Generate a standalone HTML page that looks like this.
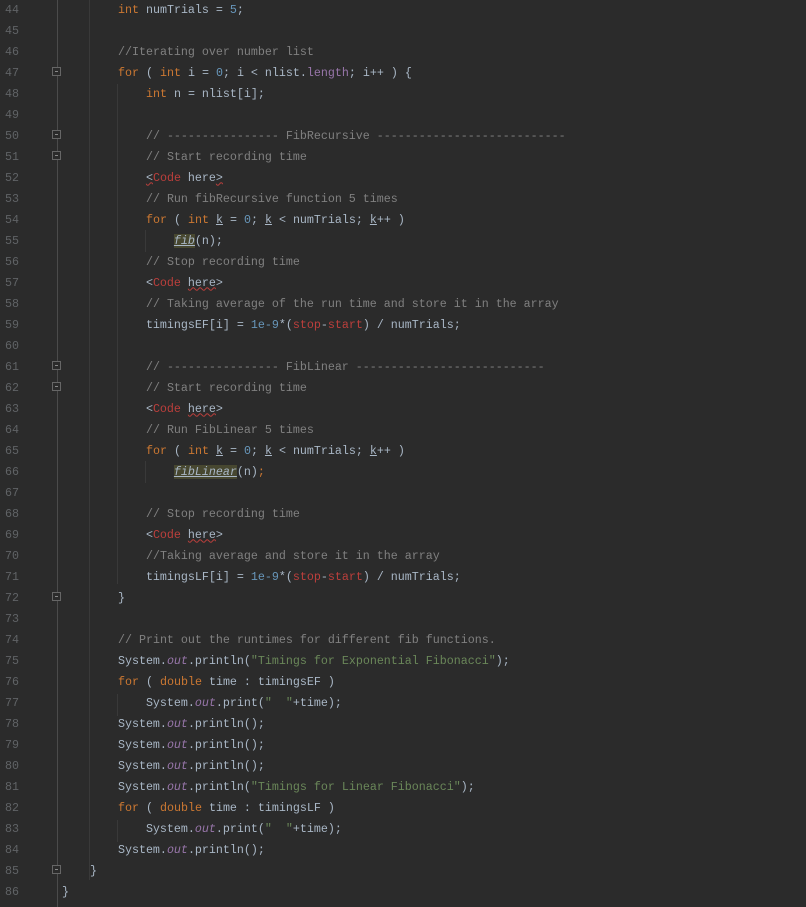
<!DOCTYPE html>
<html><head><meta charset="utf-8"><style>
html,body{margin:0;padding:0;background:#2b2b2b;width:806px;height:907px;overflow:hidden}
.ln{position:absolute;left:0;width:19px;text-align:right;color:#606366;font:11.67px "Liberation Mono",monospace;line-height:21px}
.code{position:absolute;left:62px;top:-0.5px;font:11.67px "Liberation Mono",monospace;line-height:21px;color:#a9b7c6;white-space:pre}
.k{color:#cc7832}.c{color:#808080}.n{color:#6897bb}.s{color:#6a8759}.f{color:#9876aa;font-style:italic}
.r{color:#bc3f3c}.u{text-decoration:underline}.i{font-style:italic}
.h{background:#474730}
.sq{text-decoration:underline wavy #bc3f3c;text-decoration-thickness:1px}
.g{position:absolute;width:1px;background:#393939}
.fold{position:absolute;left:52px;width:9px;height:9px;border:1px solid #666;background:#2b2b2b;box-sizing:border-box}
.fold:after{content:"";position:absolute;left:2px;top:3px;width:3px;height:1px;background:#888}
</style></head><body>
<div style="position:absolute;left:57px;top:0;width:1px;height:907px;background:#4b4b4b"></div>
<div class="g" style="left:89px;top:0;height:880px"></div>
<div class="g" style="left:117px;top:84px;height:500px"></div>
<div class="g" style="left:145px;top:230px;height:22px"></div>
<div class="g" style="left:145px;top:461px;height:22px"></div>
<div class="g" style="left:117px;top:694px;height:22px"></div>
<div class="g" style="left:117px;top:820px;height:22px"></div>
<div id="nums"></div>
<div class="fold" style="top:67px"></div>
<div class="fold" style="top:130px"></div>
<div class="fold" style="top:151px"></div>
<div class="fold" style="top:361px"></div>
<div class="fold" style="top:382px"></div>
<div class="fold" style="top:592px"></div>
<div class="fold" style="top:865px"></div>
<div class="code">        <span class="k">int</span> numTrials = <span class="n">5</span>;

        <span class="c">//Iterating over number list</span>
        <span class="k">for</span> ( <span class="k">int</span> i = <span class="n">0</span>; i &lt; nlist.<span style="color:#9876aa">length</span>; i++ ) {
            <span class="k">int</span> n = nlist[i];

            <span class="c">// ---------------- FibRecursive ---------------------------</span>
            <span class="c">// Start recording time</span>
            <span class="sq">&lt;</span><span class="r">Code</span> here<span class="sq">&gt;</span>
            <span class="c">// Run fibRecursive function 5 times</span>
            <span class="k">for</span> ( <span class="k">int</span> <span class="u">k</span> = <span class="n">0</span>; <span class="u">k</span> &lt; numTrials; <span class="u">k</span>++ )
                <span class="i u h">fib</span>(n);
            <span class="c">// Stop recording time</span>
            &lt;<span class="r">Code</span> <span class="sq">here</span>&gt;
            <span class="c">// Taking average of the run time and store it in the array</span>
            timingsEF[i] = <span class="n">1e-9</span>*(<span class="r">stop</span>-<span class="r">start</span>) / numTrials;

            <span class="c">// ---------------- FibLinear ---------------------------</span>
            <span class="c">// Start recording time</span>
            &lt;<span class="r">Code</span> <span class="sq">here</span>&gt;
            <span class="c">// Run FibLinear 5 times</span>
            <span class="k">for</span> ( <span class="k">int</span> <span class="u">k</span> = <span class="n">0</span>; <span class="u">k</span> &lt; numTrials; <span class="u">k</span>++ )
                <span class="i u h">fibLinear</span>(n)<span class="k">;</span>

            <span class="c">// Stop recording time</span>
            &lt;<span class="r">Code</span> <span class="sq">here</span>&gt;
            <span class="c">//Taking average and store it in the array</span>
            timingsLF[i] = <span class="n">1e-9</span>*(<span class="r">stop</span>-<span class="r">start</span>) / numTrials;
        }

        <span class="c">// Print out the runtimes for different fib functions.</span>
        System.<span class="f">out</span>.println(<span class="s">"Timings for Exponential Fibonacci"</span>);
        <span class="k">for</span> ( <span class="k">double</span> time : timingsEF )
            System.<span class="f">out</span>.print(<span class="s">"  "</span>+time);
        System.<span class="f">out</span>.println();
        System.<span class="f">out</span>.println();
        System.<span class="f">out</span>.println();
        System.<span class="f">out</span>.println(<span class="s">"Timings for Linear Fibonacci"</span>);
        <span class="k">for</span> ( <span class="k">double</span> time : timingsLF )
            System.<span class="f">out</span>.print(<span class="s">"  "</span>+time);
        System.<span class="f">out</span>.println();
    }
}</div>
<script>
var h='';for(var i=44;i<=86;i++){h+='<div class="ln" style="top:'+((i-44)*21-0.5)+'px">'+i+'</div>';}
document.getElementById('nums').innerHTML=h;
</script>
</body></html>
